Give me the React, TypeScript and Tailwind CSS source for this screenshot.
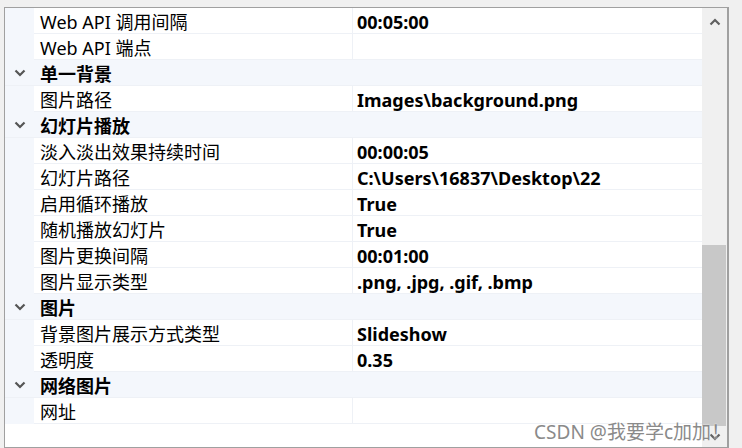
import React from "react";

type Row =
  | { kind: "cat"; label: string }
  | { kind: "prop"; name: string; value?: string };

const rows: Row[] = [
  { kind: "prop", name: "Web API 调用间隔", value: "00:05:00" },
  { kind: "prop", name: "Web API 端点" },
  { kind: "cat", label: "单一背景" },
  { kind: "prop", name: "图片路径", value: "Images\\background.png" },
  { kind: "cat", label: "幻灯片播放" },
  { kind: "prop", name: "淡入淡出效果持续时间", value: "00:00:05" },
  { kind: "prop", name: "幻灯片路径", value: "C:\\Users\\16837\\Desktop\\22" },
  { kind: "prop", name: "启用循环播放", value: "True" },
  { kind: "prop", name: "随机播放幻灯片", value: "True" },
  { kind: "prop", name: "图片更换间隔", value: "00:01:00" },
  { kind: "prop", name: "图片显示类型", value: ".png, .jpg, .gif, .bmp" },
  { kind: "cat", label: "图片" },
  { kind: "prop", name: "背景图片展示方式类型", value: "Slideshow" },
  { kind: "prop", name: "透明度", value: "0.35" },
  { kind: "cat", label: "网络图片" },
  { kind: "prop", name: "网址" },
];

function Chevron({ up = false, className = "" }: { up?: boolean; className?: string }) {
  return (
    <svg width="12" height="8" viewBox="0 0 12 8" className={className}>
      <path
        d={up ? "M1.5 6.5 L6 2 L10.5 6.5" : "M1.5 1.5 L6 6 L10.5 1.5"}
        fill="none"
        stroke="currentColor"
        strokeWidth="2.2"
      />
    </svg>
  );
}

export default function App() {
  const font = { fontFamily: '"Noto Sans", "Noto Sans CJK SC", sans-serif' };

  return (
    <div className="w-[742px] h-[448px] bg-[#f0f0f0] pt-[7px] pl-[4px] overflow-hidden relative" style={font}>
      <div className="w-[725px] h-[441px] border border-r-2 border-[#a0a0a0] bg-white flex">
        <div className="w-[697px] flex flex-col">
          {rows.map((row, i) =>
            row.kind === "cat" ? (
              <div key={i} className="h-[26px] flex items-center bg-[#f4f7fc] border-b border-[#eef1f6]">
                <div className="w-[29px] flex justify-center pt-[1px] text-[#555]">
                  <Chevron />
                </div>
                <span className="pl-[6px] pt-[2px] text-[18px] font-bold text-black leading-none">{row.label}</span>
              </div>
            ) : (
              <div key={i} className="h-[26px] flex">
                <div className="w-[29px] bg-[#f4f7fc]" />
                <div className="w-[319px] flex items-center pl-[6px] pt-[2px] border-r border-b border-[#eef1f6] text-[18px] text-black leading-none whitespace-nowrap">
                  {row.name}
                </div>
                <div className="flex-1 flex items-center pl-[4px] pt-[2px] border-b border-[#eef1f6] text-[18px] font-bold text-black leading-none whitespace-nowrap">
                  {row.value}
                </div>
              </div>
            )
          )}
        </div>
        <div className="w-[25px] bg-[#f0f0f0] flex flex-col">
          <div className="h-[27px] flex items-center justify-center text-[#606060]">
            <Chevron up />
          </div>
          <div className="h-[210px]" />
          <div className="flex-1 bg-[#c8c8c8] mr-[1px]" />
          <div className="h-[21px] flex items-center justify-center text-[#606060]">
            <Chevron />
          </div>
        </div>
      </div>
      <div className="absolute right-[12px] bottom-[6px] text-[19px] text-[#8a8a8a] leading-none [text-shadow:0_0_2px_#fff]">
        CSDN @我要学c加加！
      </div>
    </div>
  );
}
